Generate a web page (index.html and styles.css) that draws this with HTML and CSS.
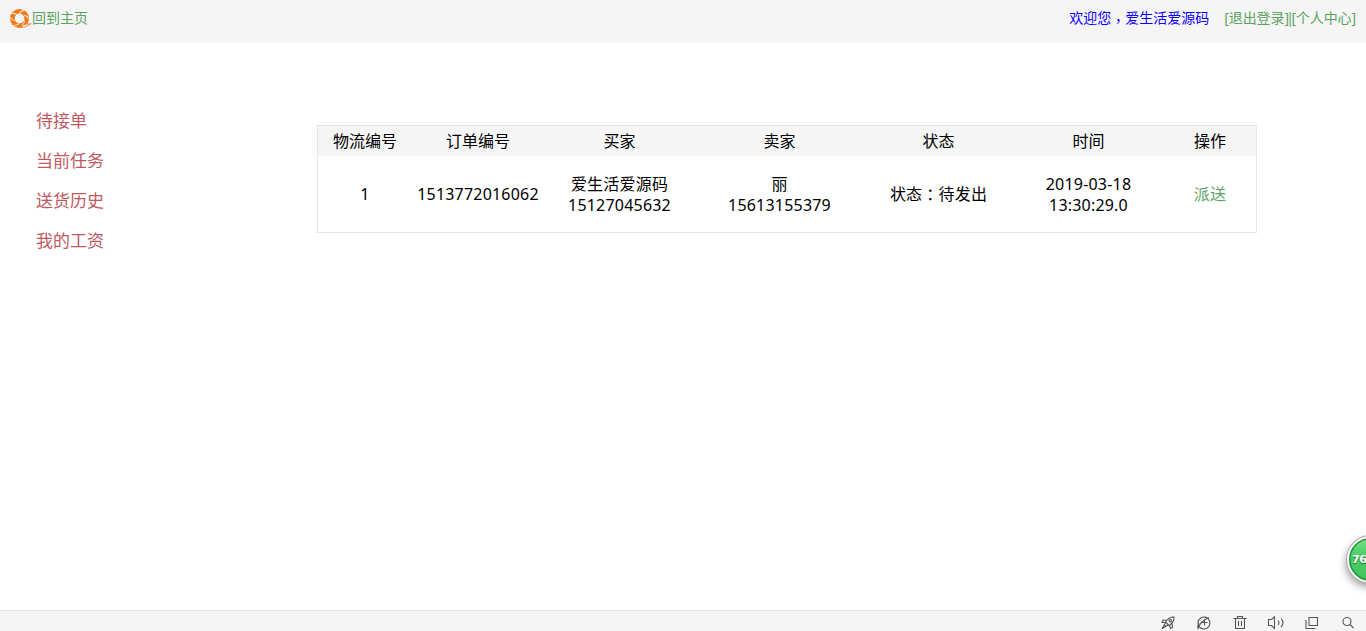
FILE: index.html
```
<!DOCTYPE html>
<html lang="zh-CN">
<head>
<meta charset="UTF-8">
<title>待接单</title>
<link rel="stylesheet" href="styles.css">
</head>
<body>
<div class="top">
	<a class="home" href="#">
		<svg class="logo" width="23" height="20" viewBox="0 0 23 20">
			<circle cx="10.500" cy="9.500" r="7.200" fill="none" stroke="#f07818" stroke-width="4.600"/>
			<g fill="none" stroke="#fde3c6" stroke-width="1.100">
				<path d="M3 4.500Q6 4 7.500 5.500"/>
				<path d="M10.500 4.500Q12 1.500 15 1.500"/>
				<path d="M15 6.500q3 0 4.500 3"/>
				<path d="M15.500 11.500q0 3-2.500 5"/>
				<path d="M10 14.500q-2 2-5 2"/>
				<path d="M5.500 11.500Q2 11 1.500 8"/>
			</g>
			<path d="M14.500 15.500l7.800-.8-6.500 3.300-3.800.3z" fill="#fff3e6" stroke="#e8752a" stroke-width=".8"/>
		</svg>
		<span>回到主页</span>
	</a>
	<div class="user">
		<span class="welcome">欢迎您<span class="comma" lang="zh-TW">，</span>爱生活爱源码</span>
		<span class="links"><a href="#">[退出登录]</a><i class="bar">|</i><a href="#">[个人中心]</a></span>
	</div>
</div>
<div class="content">
	<ul class="menu">
		<li><a href="#">待接单</a></li>
		<li><a href="#">当前任务</a></li>
		<li><a href="#">送货历史</a></li>
		<li><a href="#">我的工资</a></li>
	</ul>
	<table class="list">
		<colgroup>
			<col class="c1"><col class="c2"><col class="c3"><col class="c4"><col class="c5"><col class="c6"><col class="c7">
		</colgroup>
		<tr>
			<th>物流编号</th>
			<th>订单编号</th>
			<th>买家</th>
			<th>卖家</th>
			<th>状态</th>
			<th>时间</th>
			<th>操作</th>
		</tr>
		<tr>
			<td>1</td>
			<td>1513772016062</td>
			<td>爱生活爱源码<br>15127045632</td>
			<td>丽<br>15613155379</td>
			<td>状态<span class="colon" lang="zh-TW">：</span>待发出</td>
			<td>2019-03-18<br>13:30:29.0</td>
			<td><a href="#">派送</a></td>
		</tr>
	</table>
</div>
<div class="ball">76</div>
<div class="bottom">
	<svg width="14" height="14" viewBox="0 0 14 14">
		<path d="M13 1q-5-.3-8.500 5L8 9.500Q13.300 6 13 1zM5.500 4.500L2 4 1 6.500 4.500 6.500M8.500 9l1 3.500 2-1 -.5-4.500M4.500 7L1 12.800 7 9M4.500 9.500L2 10"/>
		<circle cx="9.300" cy="4.700" r="1.200"/>
	</svg>
	<svg width="14" height="14" viewBox="0 0 14 14">
		<path d="M3 11.500A6 6 0 1 1 7 13Q4.500 13 3 11.500M1 13Q3 5 12 1.500M1 13Q0 10 2 7M4.500 6.500h6M7.500 3.500v6"/>
	</svg>
	<svg width="14" height="14" viewBox="0 0 14 14">
		<path d="M.5 2.500h13M2.500 2.500v10h9v-10M4.500 2.500v-2h5v2M5.500 5v5M8.500 5v5"/>
	</svg>
	<svg width="14" height="14" viewBox="0 0 14 14">
		<path d="M5.500 1L2.500 3.500H-.5v6h3l3 3zM9 4.500q2 2.300 0 4.500M12 2.500q4 4.300 0 8.500"/>
	</svg>
	<svg width="14" height="14" viewBox="0 0 14 14">
		<path d="M4 1.500h8.500v8H4zM1 4v8.500h9.500"/>
	</svg>
	<svg width="14" height="14" viewBox="0 0 14 14">
		<circle cx="6" cy="5.500" r="4"/>
		<path d="M9 8.500l3.500 3.500"/>
	</svg>
</div>
</body>
</html>
```
FILE: styles.css
```
* { margin: 0; padding: 0; }
body { height: 631px; display: flex; flex-direction: column; overflow: hidden; background: #fff; color: #000; font-family: "Noto Sans", "Noto Sans CJK SC", sans-serif; font-size: 16px; }
a { color: #5ca35f; text-decoration: none; }
ul { list-style: none; }

.top { height: 43px; background: #f5f5f5; display: flex; justify-content: space-between; padding: 0 10px 0 9px; box-sizing: border-box; font-size: 14px; line-height: 20px; }
.home { display: flex; padding-top: 8px; }
.logo { margin-top: 1px; }
.user { display: flex; padding-top: 8px; }
.welcome { color: #0d00ff; margin-right: 15px; }
.comma, .colon { font-family: "Noto Sans CJK TC", sans-serif; line-height: 1; position: relative; }
.comma { top: 3px; }
.colon { top: 1px; }
.links { color: #5ca35f; letter-spacing: -.1px; }
.bar { font-style: normal; margin: 0 -2.6px; }

.content { flex: 1; display: flex; align-items: flex-start; }
.menu { width: 281px; padding: 58px 0 0 36px; }
.menu li { height: 40px; line-height: 40px; font-size: 17px; }
.menu a { color: #c0595f; }

.list { width: 940px; margin-top: 82px; table-layout: fixed; border-collapse: separate; border-spacing: 0; border: 1px solid #e6e6e6; line-height: 21px; text-align: center; }
.list th { height: 30px; background: #f5f5f5; font-weight: normal; }
.list td { height: 75px; padding-top: 1px; letter-spacing: .2px; }
.c1 { width: 94px; }
.c2 { width: 132px; }
.c3 { width: 151px; }
.c4 { width: 169px; }
.c5 { width: 149px; }
.c6 { width: 151px; }
.c7 { width: 92px; }

.ball { position: absolute; left: 1347px; top: 536px; width: 47px; height: 47px; box-sizing: border-box; padding-left: 3px; border: 2px solid #f2f2f2; border-radius: 50%; background: linear-gradient(#7be48c, #4fce69 35%, #3fc45a); box-shadow: 0 0 0 1px #aaa, -1px 4px 9px rgba(0,0,0,.4), inset 0 0 0 1.5px #1f8f43; color: #fff; font: bold 11px/43px "DejaVu Sans", sans-serif; letter-spacing: -.5px; text-shadow: 0 1px 1px #176d2d; }

.bottom { height: 20px; border-top: 1px solid #e6e6e6; background: #f5f5f5; display: flex; justify-content: flex-end; gap: 22px; padding-right: 11px; }
.bottom svg { margin-top: 5px; overflow: visible; fill: none; stroke: #555; stroke-width: 1.1; }
```
